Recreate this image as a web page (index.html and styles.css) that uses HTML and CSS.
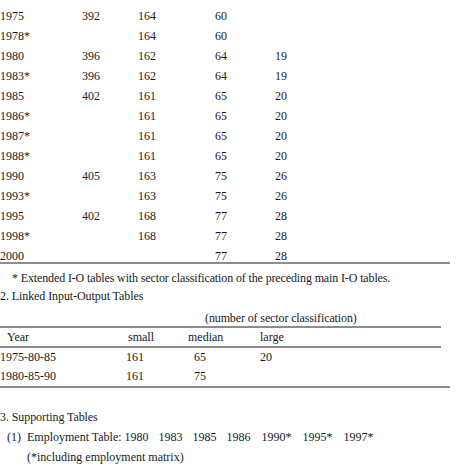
FILE: index.html
```html
<!DOCTYPE html>
<html>
<head>
<meta charset="utf-8">
<link rel="stylesheet" href="styles.css">
</head>
<body>
<div class="page">
  <div class="main-table">
    <span>1975</span><span>392</span><span>164</span><span>60</span><span></span>
    <span>1978*</span><span></span><span>164</span><span>60</span><span></span>
    <span>1980</span><span>396</span><span>162</span><span>64</span><span>19</span>
    <span>1983*</span><span>396</span><span>162</span><span>64</span><span>19</span>
    <span>1985</span><span>402</span><span>161</span><span>65</span><span>20</span>
    <span>1986*</span><span></span><span>161</span><span>65</span><span>20</span>
    <span>1987*</span><span></span><span>161</span><span>65</span><span>20</span>
    <span>1988*</span><span></span><span>161</span><span>65</span><span>20</span>
    <span>1990</span><span>405</span><span>163</span><span>75</span><span>26</span>
    <span>1993*</span><span></span><span>163</span><span>75</span><span>26</span>
    <span>1995</span><span>402</span><span>168</span><span>77</span><span>28</span>
    <span>1998*</span><span></span><span>168</span><span>77</span><span>28</span>
    <span>2000</span><span></span><span></span><span>77</span><span>28</span>
  </div>
  <div class="rule rule-main"></div>
  <p class="note">* Extended I-O tables with sector classification of the preceding main I-O tables.</p>
  <p class="heading">2. Linked Input-Output Tables</p>
  <p class="unit">(number of sector classification)</p>
  <div class="rule rule-short"></div>
  <div class="linked-head">
    <span class="h-year">Year</span><span class="h-small">small</span><span>median</span><span>large</span>
  </div>
  <div class="rule rule-short"></div>
  <div class="linked-body">
    <span>1975-80-85</span><span>161</span><span class="c-med">65</span><span>20</span>
    <span>1980-85-90</span><span>161</span><span class="c-med">75</span><span></span>
  </div>
  <div class="rule rule-long"></div>
  <p class="heading section3">3. Supporting Tables</p>
  <div class="employment">
    <span class="label">(1)</span>
    <span class="title">Employment Table:</span>
    <span class="years"><span>1980</span><span>1983</span><span>1985</span><span>1986</span><span>1990*</span><span>1995*</span><span>1997*</span></span>
  </div>
  <p class="sub">(*including employment matrix)</p>
</div>
</body>
</html>
```

FILE: styles.css
```css
html, body {
  margin: 0;
  padding: 0;
  background: #ffffff;
}
body {
  font-family: "Liberation Serif", "Times New Roman", serif;
  font-size: 12px;
  color: #1a1a1a;
}
p { margin: 0; }
.page {
  width: 474px;
  height: 474px;
  overflow: hidden;
}
.main-table {
  display: grid;
  grid-template-columns: 82px 56px 77px 60px auto;
  grid-auto-rows: 20px;
  line-height: 20px;
  padding-top: 6px;
  width: 450px;
}
.rule {
  height: 2px;
  background: #8c8c8c;
}
.rule-main { width: 450px; margin-top: -4px; }
.rule-short { width: 441px; }
.rule-long { width: 450px; }
.note {
  line-height: 18px;
  margin-top: 5px;
  padding-left: 12px;
  letter-spacing: -0.13px;
}
.heading {
  line-height: 18px;
  letter-spacing: -0.08px;
}
.unit {
  line-height: 16px;
  margin-top: 5px;
  padding-left: 205px;
  letter-spacing: -0.12px;
}
.linked-head, .linked-body {
  display: grid;
  grid-template-columns: 126px 62px 72px auto;
  width: 441px;
}
.linked-head { line-height: 18px; }
.linked-body { line-height: 19px; }
.h-year { padding-left: 7px; }
.h-small { padding-left: 2px; }
.c-med { padding-left: 6px; }
.section3 {
  line-height: 20px;
  margin-top: 19px;
}
.employment {
  display: flex;
  line-height: 20px;
  padding-left: 7px;
}
.employment .title { margin-left: 6px; margin-right: 3px; }
.years { display: flex; gap: 10px; }
.years span:nth-child(n+5) { margin-left: 1px; }
.sub {
  line-height: 20px;
  padding-left: 27px;
}
```
